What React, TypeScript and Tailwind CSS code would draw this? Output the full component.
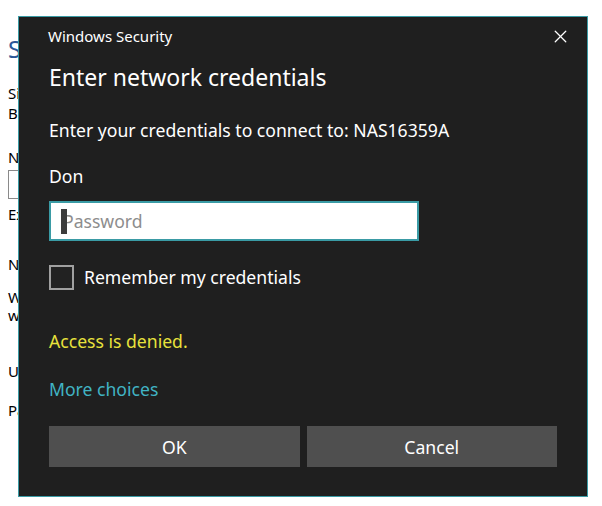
import { X } from "lucide-react";

const font = { fontFamily: '"Segoe UI", "Noto Sans", sans-serif' };

function BackgroundPage() {
  // only the left edge of this page shows past the dialog
  return (
    <div className="w-[18px] overflow-hidden pl-2 text-[15px] text-black leading-none whitespace-nowrap">
      <div className="mt-[37px] text-[24px] text-[#2b5797]">Sign in</div>
      <div className="mt-[25px]">Sign in</div>
      <div className="mt-[5px]">Before</div>
      <div className="mt-[29px]">Network</div>
      <div className="mt-[5px] h-[29px] w-[200px] border border-[#8a8a8a] bg-white" />
      <div className="mt-[8px]">Example</div>
      <div className="mt-[35px]">Network</div>
      <div className="mt-[18px]">When</div>
      <div className="mt-[3px]">will</div>
      <div className="mt-[41px]">User</div>
      <div className="mt-[24px]">Password</div>
    </div>
  );
}

export default function App() {
  return (
    <div className="relative w-[602px] h-[506px] bg-white overflow-hidden" style={font}>
      <BackgroundPage />

      {/* the credentials window sits on top of the page */}
      <div className="absolute left-[18px] top-[16px] w-[570px] h-[481px] border border-[#3a9ba5] bg-[#1f1f1f] text-white">
        <div className="flex items-center justify-between pl-[29px] pr-[16px] h-[41px]">
          <span className="text-[15px] -mt-[3px]">Windows Security</span>
          <X className="w-[21px] h-[21px] -mt-[2px] text-white" strokeWidth={1.5} />
        </div>

        <div className="px-[30px]">
          <h1 className="mt-[3px] text-[23px] leading-[32px] font-normal">Enter network credentials</h1>

          <p className="mt-[25px] text-[17.6px] leading-[24px]">
            Enter your credentials to connect to: NAS16359A
          </p>

          <p className="mt-[22px] text-[17.6px] leading-[24px]">Don</p>

          <div className="relative mt-[13px] w-[370px] h-[40px] border-2 border-[#3a9ba5] bg-white flex items-center pl-[12px]">
            <span className="absolute left-[10px] top-[6px] w-[6px] h-[25px] bg-[#3c3c3c]" />
            <span className="text-[17.6px] text-[#8d8d8d]">Password</span>
          </div>

          <label className="mt-[23px] flex items-center gap-[10px]">
            <span className="w-[25px] h-[25px] border-2 border-[#a0a0a0] bg-[#222]" />
            <span className="text-[17.6px]">Remember my credentials</span>
          </label>

          <p className="mt-[39px] text-[17.6px] leading-[24px] text-[#e8e23c]">Access is denied.</p>

          <p className="mt-[24px] text-[17.6px] leading-[24px] text-[#41b4c4]">More choices</p>

          <div className="mt-[25px] flex gap-[7px] w-[508px]">
            <button className="flex-1 h-[41px] bg-[#4f4f4f] text-[17.6px] text-white">OK</button>
            <button className="flex-1 h-[41px] bg-[#4f4f4f] text-[17.6px] text-white">Cancel</button>
          </div>
        </div>
      </div>
    </div>
  );
}
